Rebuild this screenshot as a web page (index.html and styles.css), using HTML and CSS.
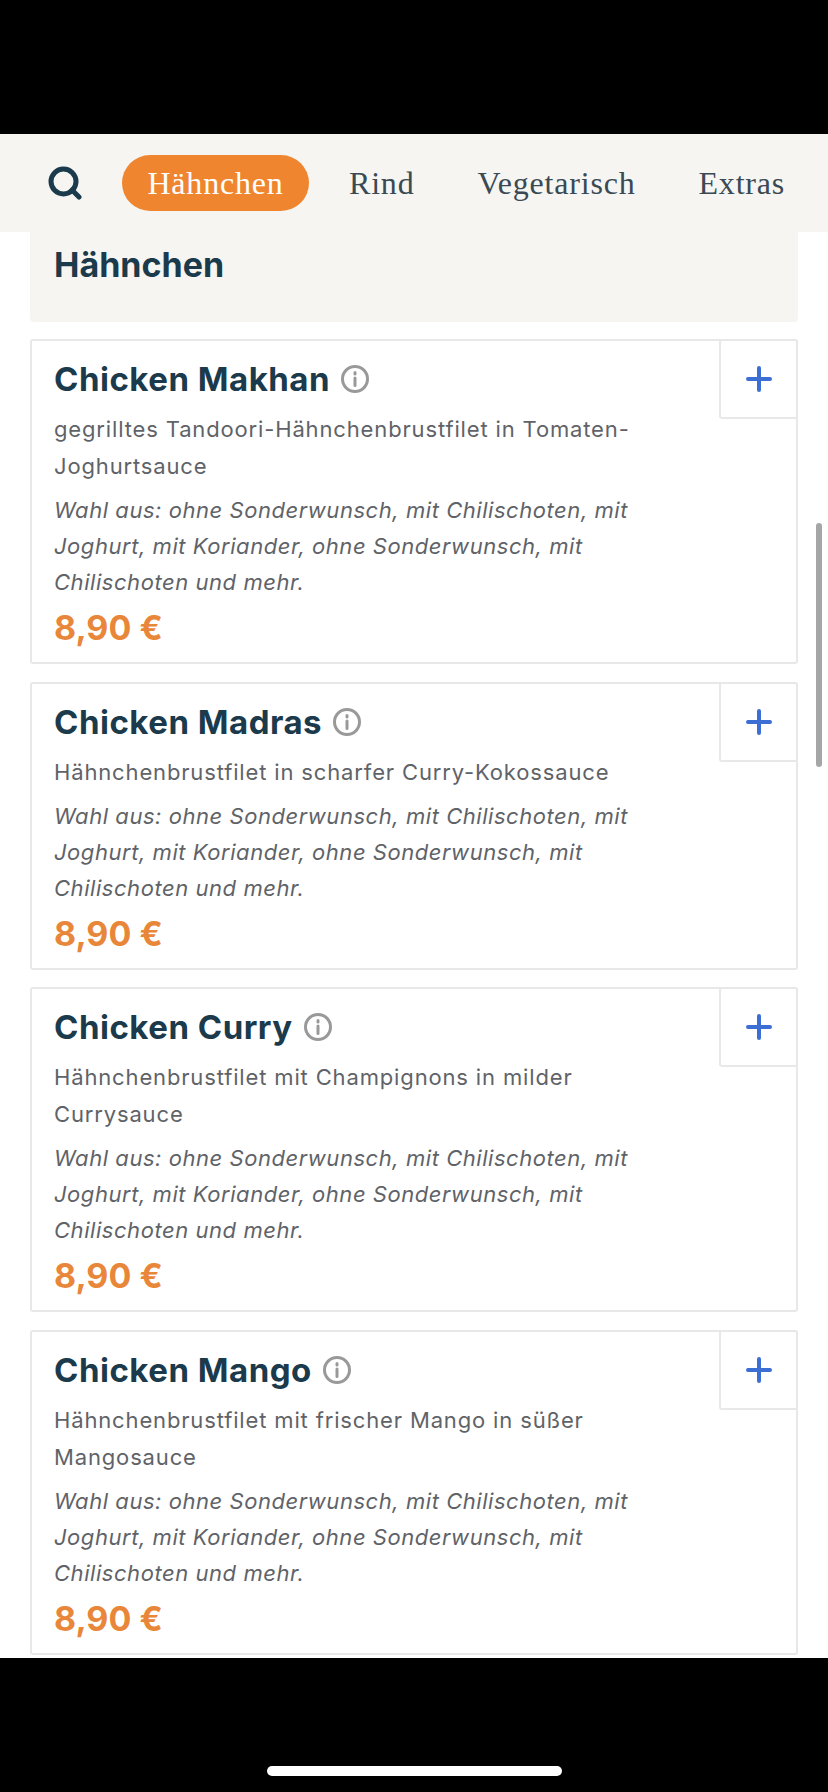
FILE: index.html
```html
<!DOCTYPE html>
<html lang="de">
<head>
    <meta charset="UTF-8">
    <meta name="viewport" content="width=device-width, initial-scale=1.0">
    <title>Speisekarte</title>
    <link rel="stylesheet" href="styles.css">
</head>
<body>
    <div class="screen">
        <nav class="tabs">
            <svg class="search-icon" width="34" height="34" viewBox="0 0 34 34" fill="none" stroke="#1b3a4b" stroke-width="5" stroke-linecap="round">
                <circle cx="15.5" cy="15.5" r="12.5"/>
                <path d="M24 24l7 7"/>
            </svg>
            <a class="tab active">Hähnchen</a>
            <a class="tab">Rind</a>
            <a class="tab">Vegetarisch</a>
            <a class="tab">Extras</a>
        </nav>

        <main class="menu">
            <header class="section-head">
                <h2>Hähnchen</h2>
            </header>

            <article class="dish">
                <button class="add"><svg width="26" height="26" viewBox="0 0 26 26"><path d="M13 2v22M2 13h22"/></svg></button>
                <h3>Chicken Makhan <svg class="info" width="30" height="30" viewBox="0 0 30 30"><circle cx="15" cy="15" r="12.5"/><path d="M15 14v7.5M15 8.5v1.5"/></svg></h3>
                <p class="desc">gegrilltes Tandoori-Hähnchenbrustfilet in Tomaten-<br>Joghurtsauce</p>
                <p class="options">Wahl aus: ohne Sonderwunsch, mit Chilischoten, mit<br>Joghurt, mit Koriander, ohne Sonderwunsch, mit<br>Chilischoten und mehr.</p>
                <div class="price">8,90 €</div>
            </article>

            <article class="dish">
                <button class="add"><svg width="26" height="26" viewBox="0 0 26 26"><path d="M13 2v22M2 13h22"/></svg></button>
                <h3>Chicken Madras <svg class="info" width="30" height="30" viewBox="0 0 30 30"><circle cx="15" cy="15" r="12.5"/><path d="M15 14v7.5M15 8.5v1.5"/></svg></h3>
                <p class="desc">Hähnchenbrustfilet in scharfer Curry-Kokossauce</p>
                <p class="options">Wahl aus: ohne Sonderwunsch, mit Chilischoten, mit<br>Joghurt, mit Koriander, ohne Sonderwunsch, mit<br>Chilischoten und mehr.</p>
                <div class="price">8,90 €</div>
            </article>

            <article class="dish">
                <button class="add"><svg width="26" height="26" viewBox="0 0 26 26"><path d="M13 2v22M2 13h22"/></svg></button>
                <h3>Chicken Curry <svg class="info" width="30" height="30" viewBox="0 0 30 30"><circle cx="15" cy="15" r="12.5"/><path d="M15 14v7.5M15 8.5v1.5"/></svg></h3>
                <p class="desc">Hähnchenbrustfilet mit Champignons in milder<br>Currysauce</p>
                <p class="options">Wahl aus: ohne Sonderwunsch, mit Chilischoten, mit<br>Joghurt, mit Koriander, ohne Sonderwunsch, mit<br>Chilischoten und mehr.</p>
                <div class="price">8,90 €</div>
            </article>

            <article class="dish">
                <button class="add"><svg width="26" height="26" viewBox="0 0 26 26"><path d="M13 2v22M2 13h22"/></svg></button>
                <h3>Chicken Mango <svg class="info" width="30" height="30" viewBox="0 0 30 30"><circle cx="15" cy="15" r="12.5"/><path d="M15 14v7.5M15 8.5v1.5"/></svg></h3>
                <p class="desc">Hähnchenbrustfilet mit frischer Mango in süßer<br>Mangosauce</p>
                <p class="options">Wahl aus: ohne Sonderwunsch, mit Chilischoten, mit<br>Joghurt, mit Koriander, ohne Sonderwunsch, mit<br>Chilischoten und mehr.</p>
                <div class="price">8,90 €</div>
            </article>

            <div class="scrollbar"></div>
        </main>

        <div class="home-area">
            <div class="home-bar"></div>
        </div>
    </div>
</body>
</html>
```

FILE: styles.css
```css
* {
    box-sizing: border-box;
}

body {
    margin: 0;
    background-color: #000;
    font-family: Inter, 'Noto Sans', sans-serif;
    color: #5f6368;
}

.screen {
    height: 1792px;
    padding-top: 134px;
    display: flex;
    flex-direction: column;
    overflow: hidden;
}

.tabs {
    flex: none;
    height: 98px;
    background-color: #f6f5f2;
    display: flex;
    align-items: center;
    gap: 63px;
    padding-left: 48px;
    font-family: 'Liberation Serif', serif;
    font-size: 32px;
    color: #3a4a54;
}

.search-icon {
    flex: none;
    margin-right: -23px;
}

.tab {
    flex: none;
    line-height: 56px;
    white-space: nowrap;
    letter-spacing: 0.8px;
}

.tab.active {
    width: 187px;
    height: 56px;
    margin-right: -23px;
    border-radius: 28px;
    background-color: #f0852f;
    color: #fff;
    text-align: center;
}

.menu {
    position: relative;
    flex: 1;
    min-height: 0;
    background-color: #fff;
    padding: 0 30px;
    overflow: hidden;
}

.section-head {
    height: 90px;
    padding: 14px 24px 0;
    background-color: #f6f5f2;
    border-radius: 0 0 4px 4px;
    margin-bottom: 17px;
}

.section-head h2 {
    margin: 0;
    font-size: 34px;
    line-height: 38px;
    font-weight: 700;
    color: #1b3a4b;
}

.dish {
    position: relative;
    margin-bottom: 17.5px;
    padding: 18px 22px 14px;
    border: 2px solid #e8e8e8;
    border-radius: 3px;
    background-color: #fff;
}

.add {
    position: absolute;
    top: -2px;
    right: -2px;
    width: 79px;
    height: 80px;
    padding: 0;
    background: #fff;
    border: 2px solid #e8e8e8;
    border-radius: 3px;
    display: flex;
    align-items: center;
    justify-content: center;
}

.add path {
    fill: none;
    stroke: #3b6fd4;
    stroke-width: 4;
    stroke-linecap: round;
}

.dish h3 {
    margin: 0 0 12px;
    font-size: 33px;
    line-height: 40px;
    font-weight: 700;
    letter-spacing: 0.5px;
    color: #1b3a4b;
    display: flex;
    align-items: center;
    gap: 10px;
}

.info {
    flex: none;
    fill: none;
    stroke: #999;
    stroke-width: 3;
    stroke-linecap: round;
}

.desc {
    margin: 0 0 7px;
    font-size: 22px;
    line-height: 37px;
    letter-spacing: 0.85px;
}

.options {
    margin: 0 0 8px;
    font-size: 22px;
    line-height: 36px;
    letter-spacing: 0.55px;
    font-style: italic;
}

.price {
    font-size: 34px;
    line-height: 40px;
    font-weight: 700;
    color: #e8873a;
}

.scrollbar {
    position: absolute;
    top: 291px;
    right: 6px;
    width: 6px;
    height: 244px;
    border-radius: 3px;
    background-color: #a6a6a6;
}

.home-area {
    flex: none;
    height: 134px;
    background-color: #000;
    display: flex;
    justify-content: center;
    padding-top: 108px;
}

.home-bar {
    width: 295px;
    height: 10px;
    border-radius: 5px;
    background-color: #fff;
}
```
